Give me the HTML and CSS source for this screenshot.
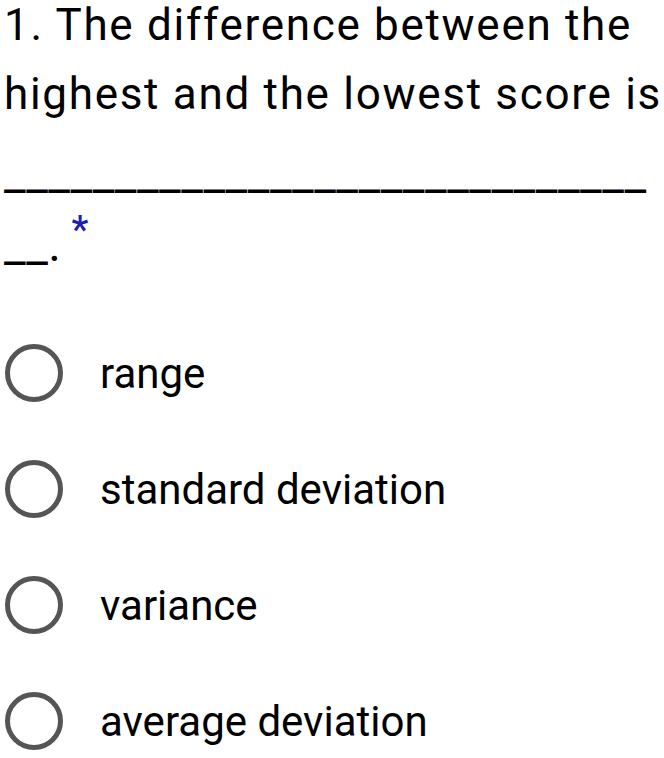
FILE: index.html
```html
<!DOCTYPE html>
<html>
<head>
<meta charset="utf-8">
<link rel="stylesheet" href="styles.css">
</head>
<body>
<div class="question">
  <div class="title">1. The difference between the highest and the lowest score is</div>
  <div class="title blank blank-first">_____________________________</div>
  <div class="title blank blank-last">__.<span class="req">*</span></div>
</div>
<div class="options">
  <div class="option"><span class="radio"></span><span class="label">range</span></div>
  <div class="option"><span class="radio"></span><span class="label">standard deviation</span></div>
  <div class="option"><span class="radio"></span><span class="label">variance</span></div>
  <div class="option"><span class="radio"></span><span class="label">average deviation</span></div>
</div>
</body>
</html>
```
FILE: styles.css
```css
html, body {
  margin: 0;
  padding: 0;
  background: #ffffff;
}
body {
  width: 664px;
  height: 758px;
  overflow: hidden;
  font-family: Roboto, "Liberation Sans", sans-serif;
  color: #000;
}
.question {
  padding: 0 0 0 4px;
  margin-top: -9px;
}
.title {
  font-size: 44px;
  line-height: 69px;
  letter-spacing: 1.7px;
}
.blank {
  font-size: 48px;
  letter-spacing: 0.5px;
  white-space: nowrap;
}
.blank-first {
  margin-top: 9px;
}
.blank-last {
  margin-top: 3px;
}
.req {
  color: #1c1cb4;
  font-size: 38px;
  font-weight: 500;
  line-height: 0;
  vertical-align: 18px;
  margin-left: 10px;
}
.options {
  display: flex;
  flex-direction: column;
  gap: 58px;
  margin-top: 65px;
  padding-left: 5px;
}
.option {
  display: flex;
  align-items: center;
  height: 58px;
}
.radio {
  width: 48px;
  height: 48px;
  border: 5px solid #555555;
  border-radius: 50%;
  flex: none;
}
.label {
  margin-left: 37px;
  font-size: 42px;
}
```
